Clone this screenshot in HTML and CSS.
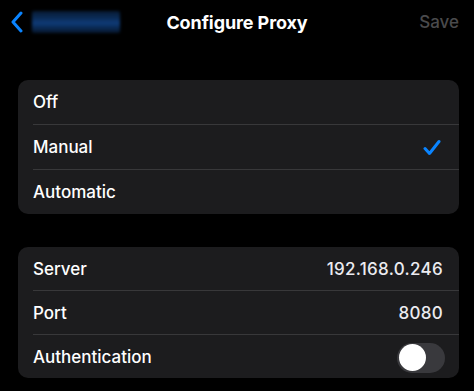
FILE: index.html
```html
<!DOCTYPE html>
<html lang="en">
<head>
    <meta charset="UTF-8">
    <meta name="viewport" content="width=device-width, initial-scale=1.0">
    <title>Configure Proxy</title>
    <link rel="stylesheet" href="styles.css">
</head>
<body>
    <div class="nav">
        <div class="nav-left">
            <svg class="chevron" width="14" height="22" viewBox="0 0 14 22">
                <path d="M11 2 L3 11 L11 20" fill="none" stroke="#0a84ff" stroke-width="3" stroke-linecap="round" stroke-linejoin="round"/>
            </svg>
            <span class="back-label" aria-hidden="true"></span>
        </div>
        <div class="nav-title">Configure Proxy</div>
        <div class="nav-right">Save</div>
    </div>

    <div class="group">
        <div class="row">
            <div class="row-inner">
                <span class="label">Off</span>
            </div>
        </div>
        <div class="row">
            <div class="row-inner">
                <span class="label">Manual</span>
                <svg class="check" width="18" height="17" viewBox="0 0 18 17">
                    <path d="M2 9.5 L6.5 14.5 L16 2.5" fill="none" stroke="#0a84ff" stroke-width="3" stroke-linecap="round" stroke-linejoin="round"/>
                </svg>
            </div>
        </div>
        <div class="row">
            <div class="row-inner">
                <span class="label">Automatic</span>
            </div>
        </div>
    </div>

    <div class="group group-second">
        <div class="row">
            <div class="row-inner">
                <span class="label">Server</span>
                <span class="value">192.168.0.246</span>
            </div>
        </div>
        <div class="row">
            <div class="row-inner">
                <span class="label">Port</span>
                <span class="value">8080</span>
            </div>
        </div>
        <div class="row">
            <div class="row-inner">
                <span class="label">Authentication</span>
                <span class="toggle"><span class="knob"></span></span>
            </div>
        </div>
    </div>
</body>
</html>
```

FILE: styles.css
```css
body {
    background: #000;
    margin: 0;
    font-family: 'Inter', 'Liberation Sans', Arial, sans-serif;
    color: #fff;
    overflow: hidden;
}
.nav {
    display: grid;
    grid-template-columns: 1fr auto 1fr;
    align-items: center;
    height: 44px;
}
.nav-left {
    display: flex;
    align-items: center;
    padding-left: 10px;
}
.chevron {
    display: block;
}
.back-label {
    display: block;
    width: 88px;
    height: 22px;
    margin-left: 8px;
    background: linear-gradient(180deg, #071a33 0%, #0b2d5a 35%, #0f3b78 55%, #0a2a55 75%, #06162c 100%);
    filter: blur(1.5px);
    border-radius: 2px;
}
.nav-title {
    font-size: 18px;
    font-weight: 700;
    letter-spacing: -0.1px;
}
.nav-right {
    justify-self: end;
    padding-right: 15px;
    font-size: 17px;
    font-weight: 500;
    color: #4a4a4c;
}
.group {
    background: #1c1c1e;
    border-radius: 10px;
    margin: 36px 15px 0 18px;
    overflow: hidden;
}
.group-second {
    margin-top: 33px;
}
.row {
    padding-left: 15px;
}
.row-inner {
    display: flex;
    align-items: center;
    justify-content: space-between;
    height: 44px;
    padding-right: 16px;
    border-bottom: 1px solid #38383a;
}
.group-second .row-inner {
    height: 43px;
}
.row:last-child .row-inner {
    border-bottom: none;
}
.label {
    font-size: 17px;
    font-weight: 500;
}
.value {
    font-size: 17px;
    font-weight: 500;
    letter-spacing: 0.3px;
    color: #ebebf0;
}
.check {
    display: block;
    margin-right: 2px;
}
.toggle {
    display: flex;
    align-items: center;
    width: 48px;
    height: 30px;
    border-radius: 15px;
    background: #39393d;
    padding: 0 2px;
    box-sizing: border-box;
    margin-top: 2px;
    margin-right: -2px;
}
.knob {
    width: 27px;
    height: 27px;
    border-radius: 50%;
    background: #fff;
}
```
